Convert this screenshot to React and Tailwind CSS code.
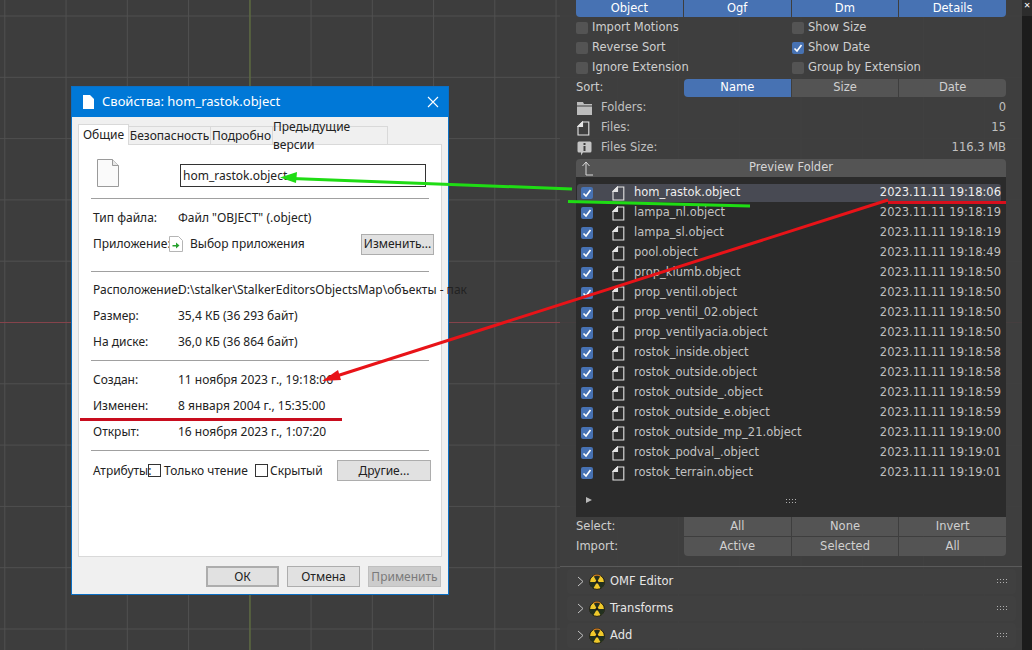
import React from "react";

const files = [
  ["hom_rastok.object", "2023.11.11 19:18:06"],
  ["lampa_nl.object", "2023.11.11 19:18:19"],
  ["lampa_sl.object", "2023.11.11 19:18:19"],
  ["pool.object", "2023.11.11 19:18:49"],
  ["prop_kiumb.object", "2023.11.11 19:18:50"],
  ["prop_ventil.object", "2023.11.11 19:18:50"],
  ["prop_ventil_02.object", "2023.11.11 19:18:50"],
  ["prop_ventilyacia.object", "2023.11.11 19:18:50"],
  ["rostok_inside.object", "2023.11.11 19:18:58"],
  ["rostok_outside.object", "2023.11.11 19:18:58"],
  ["rostok_outside_.object", "2023.11.11 19:18:59"],
  ["rostok_outside_e.object", "2023.11.11 19:18:59"],
  ["rostok_outside_mp_21.object", "2023.11.11 19:19:00"],
  ["rostok_podval_.object", "2023.11.11 19:19:01"],
  ["rostok_terrain.object", "2023.11.11 19:19:01"],
];

const gridX = Array.from({ length: 17 }, (_, i) => 4.8 + i * 61.25);
const gridY = Array.from({ length: 11 }, (_, i) => 16 + i * 61.3);

const Grid = () => (
  <svg className="absolute inset-0" width="1032" height="650">
    {gridX.map((x) => (
      <line key={x} x1={x} x2={x} y1="0" y2="650" stroke="#505050" />
    ))}
    {gridY.map((y) => (
      <line key={y} x1="0" x2="1032" y1={y} y2={y} stroke="#505050" />
    ))}
    <line x1="250" x2="250" y1="0" y2="650" stroke="#64793a" />
    <line x1="0" x2="1032" y1="322.5" y2="322.5" stroke="#85434b" />
  </svg>
);

const Arrows = () => (
  <svg className="absolute inset-0 pointer-events-none" width="1032" height="650">
    <line x1="292" y1="178.5" x2="572" y2="189" stroke="#1fdc14" strokeWidth="3" />
    <polygon points="280,177.5 297,172 296,183" fill="#1fdc14" />
    <line x1="568" y1="201.5" x2="750" y2="206" stroke="#1fdc14" strokeWidth="3" />
    <line x1="335" y1="376.5" x2="888" y2="200" stroke="#e81318" strokeWidth="3" />
    <polygon points="322,381 338,370 341,380" fill="#e81318" />
    <line x1="888" y1="202.5" x2="1006" y2="202.5" stroke="#d80f1c" strokeWidth="3" />
    <line x1="80" y1="419.5" x2="342" y2="419.5" stroke="#c80d1e" strokeWidth="3" />
  </svg>
);

const PageIcon = ({ className = "" }) => (
  <svg className={className} width="13" height="15" viewBox="0 0 13 15" fill="none" stroke="#e4e4e4" strokeWidth="1.1">
    <path d="M1 5.5 L5.5 1 H11.8 V14 H1 Z" />
    <path d="M1 5.5 L5.5 1 V5.5 Z" fill="#e4e4e4" />
  </svg>
);

const Check = ({ on }) => (
  <span className={`flex h-3 w-3 shrink-0 items-center justify-center rounded-[2px] ${on ? "bg-[#4772b3]" : "bg-[#545454]"}`}>
    {on && (
      <svg width="10" height="10" viewBox="0 0 10 10" fill="none" stroke="#fff" strokeWidth="1.6">
        <path d="M1.5 5.5 L4 8 L8.5 2" />
      </svg>
    )}
  </span>
);

const Option = ({ label, on }) => (
  <div className="flex h-5 items-center gap-1">
    <Check on={on} />
    <span>{label}</span>
  </div>
);

const Seg = ({ items, active, className = "" }) => (
  <div className={`flex gap-px overflow-hidden ${className}`}>
    {items.map((t) => (
      <div
        key={t}
        className={`flex flex-1 items-center justify-center ${t === active ? "bg-[#4772b3] text-white" : "bg-[#545454] text-[#d0d0d0]"}`}
      >
        {t}
      </div>
    ))}
  </div>
);

const Radiation = () => (
  <svg width="16" height="16" viewBox="0 0 16 16">
    <circle cx="8" cy="8" r="7.4" fill="#f0c92b" stroke="#1c1c14" strokeWidth="1" />
    <path d="M8 8 L4.3 1.6 A7.4 7.4 0 0 1 11.7 1.6 Z" fill="#c9761f" />
    <path d="M8 8 L0.6 8 A7.4 7.4 0 0 0 4.3 14.4 Z" fill="#22301f" />
    <path d="M8 8 L15.4 8 A7.4 7.4 0 0 1 11.7 14.4 Z" fill="#22301f" />
    <path d="M8 8 L5 2.6 A6.2 6.2 0 0 1 11 2.6 Z" fill="#22301f" />
    <circle cx="8" cy="8" r="1.6" fill="#1c1c14" />
  </svg>
);

const Grip = () => (
  <svg width="11" height="5" viewBox="0 0 11 5" fill="#b0b0b0">
    {[0, 3, 6, 9].map((x) => (
      <g key={x}>
        <rect x={x} y="0" width="1" height="1" />
        <rect x={x} y="3" width="1" height="1" />
      </g>
    ))}
  </svg>
);

const SubPanel = ({ title }) => (
  <div className="flex h-[25px] items-center rounded-[4px] bg-[#404040] pl-[10px] pr-[8px] mb-[2px]">
    <svg width="7" height="11" viewBox="0 0 7 11" fill="none" stroke="#c4c4c4" strokeWidth="1">
      <path d="M1 1 L6 5.5 L1 10" />
    </svg>
    <span className="ml-[5px]">
      <Radiation />
    </span>
    <span className="ml-[5px] flex-1 text-[#e6e6e6]">{title}</span>
    <Grip />
  </div>
);

const InfoRow = ({ icon, label, value }) => (
  <div className="flex h-5 items-center text-[#c0c0c0]">
    <span className="flex w-[25px] items-center pl-px">{icon}</span>
    <span className="flex-1">{label}</span>
    <span>{value}</span>
  </div>
);

const BlenderPanel = () => (
  <div className="relative flex w-[462px] flex-col bg-[#3e3e3e]/90 text-[11.5px] text-[#cfcfcf] font-['DejaVu_Sans',sans-serif]">
    <div className="flex flex-col pl-4 pr-4">
      <Seg items={["Object", "Ogf", "Dm", "Details"]} active="none-all" className="h-[17px] rounded-b-[4px] [&>div]:bg-[#4772b3] [&>div]:text-white" />
      <div className="mt-[1px] grid grid-cols-2 gap-x-[0px]">
        <div className="flex flex-col">
          <Option label="Import Motions" />
          <Option label="Reverse Sort" />
          <Option label="Ignore Extension" />
        </div>
        <div className="flex flex-col pl-[1px]">
          <Option label="Show Size" />
          <Option label="Show Date" on />
          <Option label="Group by Extension" />
        </div>
      </div>
      <div className="flex h-5 items-center">
        <span className="w-[108px]">Sort:</span>
        <Seg items={["Name", "Size", "Date"]} active="Name" className="h-[18px] flex-1 rounded-[4px]" />
      </div>
      <InfoRow
        label="Folders:"
        value="0"
        icon={
          <svg width="15" height="13" viewBox="0 0 15 13" fill="#bdbdbd">
            <path d="M0 0 H6 L7 2 H15 V3.5 H0 Z M0 4.5 H15 V13 H0 Z" />
          </svg>
        }
      />
      <InfoRow label="Files:" value="15" icon={<PageIcon />} />
      <InfoRow
        label="Files Size:"
        value="116.3 MB"
        icon={
          <svg width="15" height="15" viewBox="0 0 15 15">
            <path d="M2 0.5 H13 A1.5 1.5 0 0 1 14.5 2 V10 A1.5 1.5 0 0 1 13 11.5 H6 L4 14.5 V11.5 H2 A1.5 1.5 0 0 1 0.5 10 V2 A1.5 1.5 0 0 1 2 0.5 Z" fill="#c4c4c4" />
            <rect x="6.5" y="2" width="2" height="2" fill="#3e3e3e" />
            <rect x="6.5" y="5" width="2" height="5" fill="#3e3e3e" />
          </svg>
        }
      />
      <div className="relative mt-px flex h-[18px] items-center justify-center rounded-t-[4px] bg-[#545454] text-[#d6d6d6]">
        <svg className="absolute left-[5px] top-[2px]" width="13" height="15" viewBox="0 0 13 15" fill="none" stroke="#d8d8d8" strokeWidth="1">
          <path d="M5 14 V1 M1.5 5 L5 1 L8.5 5 M5 14 H12" />
        </svg>
        Preview Folder
      </div>

      <div className="flex h-[340px] flex-col bg-[#2b2b2b] pt-[7px]">
        {files.map(([name, date], i) => (
          <div
            key={name}
            className={`ml-px mr-[5px] flex h-[18px] items-center rounded-[3px] pl-[4px] pr-0 mb-[2px] ${i === 0 ? "bg-[#484a53] text-[#eeeeee]" : "text-[#c2c2c2]"}`}
          >
            <Check on />
            <PageIcon className="ml-[19px]" />
            <span className="ml-[9px] flex-1">{name}</span>
            <span className={i === 0 ? "text-[#eeeeee]" : "text-[#bebebe]"}>{date}</span>
          </div>
        ))}
        <div className="relative mt-[15px] flex items-center justify-center">
          <span className="absolute left-[10px] top-[-2px] h-0 w-0 border-y-[3px] border-l-[6px] border-y-transparent border-l-[#b8b8b8]" />
          <Grip />
        </div>
      </div>

      <div className="flex">
        <div className="flex w-[108px] flex-col">
          <span className="flex h-5 items-center">Select:</span>
          <span className="flex h-5 items-center">Import:</span>
        </div>
        <div className="flex flex-1 flex-col gap-px">
          <Seg items={["All", "None", "Invert"]} className="h-[19px]" />
          <Seg items={["Active", "Selected", "All"]} className="h-[19px] rounded-b-[4px]" />
        </div>
      </div>
    </div>

    <div className="mt-[9px] h-px bg-[#5a5a5a]" />
    <div className="mt-px flex flex-col pl-[7px] pr-[6px] pt-[1px]">
      <SubPanel title="OMF Editor" />
      <SubPanel title="Transforms" />
      <SubPanel title="Add" />
    </div>
  </div>
);

const TabBtn = ({ children, active, className = "" }) => (
  <div
    className={`flex items-center justify-center border border-[#d9d9d9] ${active ? "h-[21px] border-b-0 bg-white" : "h-[19px] bg-[#f0f0f0]"} ${className}`}
  >
    {children}
  </div>
);

const WinBtn = ({ children, className = "" }) => (
  <div className={`flex items-center justify-center border border-[#adadad] bg-[#e1e1e1] ${className}`}>{children}</div>
);

const Line = ({ className = "" }) => <div className={`mx-[12px] h-px bg-[#a0a0a0] ${className}`} />;

const Prop = ({ label, children, className = "" }) => (
  <div className={`flex h-[26px] items-center pl-[14px] ${className}`}>
    <span className="w-[85px] shrink-0">{label}</span>
    <span className="whitespace-nowrap">{children}</span>
  </div>
);

const PropertiesDialog = () => (
  <div className="absolute left-[71px] top-[86px] flex h-[509px] w-[378px] flex-col border border-[#0b6fc4] bg-[#f0f0f0] text-[12px] text-[#222] font-['Noto_Sans',sans-serif]">
    <div className="flex h-[30px] shrink-0 items-center bg-[#0078d7] pl-[11px] pr-[9px] text-[13px] text-white">
      <svg width="11" height="14" viewBox="0 0 11 14" fill="#fff">
        <path d="M0 0 H7 L11 4 V14 H0 Z" />
      </svg>
      <span className="ml-[8px] flex-1">Свойства: hom_rastok.object</span>
      <svg width="12" height="12" viewBox="0 0 12 12" stroke="#fff" strokeWidth="1.1">
        <path d="M1 1 L11 11 M11 1 L1 11" />
      </svg>
    </div>

    <div className="relative z-10 mt-[7px] flex h-[21px] items-end pl-[6px]">
      <TabBtn active className="w-[51px]">Общие</TabBtn>
      <TabBtn className="w-[82px] border-l-0">Безопасность</TabBtn>
      <TabBtn className="w-[62px] border-l-0">Подробно</TabBtn>
      <TabBtn className="w-[115px] border-l-0">Предыдущие версии</TabBtn>
    </div>

    <div className="mx-[6px] -mt-px h-[413px] border border-[#d9d9d9] bg-white">
      <div className="flex h-[53px] items-start">
        <svg className="ml-[18px] mt-[14px]" width="22" height="28" viewBox="0 0 22 28" fill="#fafafa" stroke="#9a9a9a">
          <path d="M0.5 0.5 H15.5 L21.5 6.5 V27.5 H0.5 Z" />
          <path d="M15.5 0.5 V6.5 H21.5" fill="#e8e8e8" />
        </svg>
        <div className="ml-[61px] mt-[19px] flex h-[23px] w-[246px] items-center border border-[#333] pl-[2px]">hom_rastok.object</div>
      </div>
      <Line />
      <Prop label="Тип файла:" className="mt-[6px]">Файл "OBJECT" (.object)</Prop>
      <div className="flex h-[26px] items-center pl-[14px]">
        <span className="w-[75px] shrink-0">Приложение:</span>
        <svg className="ml-[1px] shrink-0" width="14" height="16" viewBox="0 0 14 16" fill="#fff" stroke="#b5b5b5">
          <path d="M0.5 0.5 H9.5 L13.5 4.5 V15.5 H0.5 Z" />
          <path d="M3.5 9 H7 V6.5 L10.5 9.5 L7 12.5 V10.5 H3.5 Z" fill="#27a12e" stroke="none" />
        </svg>
        <span className="ml-[7px] flex-1">Выбор приложения</span>
        <WinBtn className="mr-[7px] h-[21px] w-[73px]">Изменить...</WinBtn>
      </div>
      <Line className="mt-[14px]" />
      <Prop label="Расположение:" className="mt-[5px]">D:\stalker\StalkerEditorsObjectsMap\объекты - пак</Prop>
      <Prop label="Размер:">35,4 КБ (36 293 байт)</Prop>
      <Prop label="На диске:">36,0 КБ (36 864 байт)</Prop>
      <Line className="mt-[5px]" />
      <Prop label="Создан:" className="mt-[6px]">11 ноября 2023 г., 19:18:06</Prop>
      <Prop label="Изменен:">8 января 2004 г., 15:35:00</Prop>
      <Prop label="Открыт:">16 ноября 2023 г., 1:07:20</Prop>
      <Line className="mt-[5px]" />
      <div className="mt-[9px] flex h-[21px] items-center pl-[14px]">
        <span className="w-[55px]">Атрибуты:</span>
        <span className="h-[13px] w-[13px] border border-[#333]" />
        <span className="ml-[3px] w-[91px]">Только чтение</span>
        <span className="h-[13px] w-[13px] border border-[#333]" />
        <span className="ml-[2px] w-[67px]">Скрытый</span>
        <WinBtn className="h-[21px] w-[94px]">Другие...</WinBtn>
      </div>
    </div>

    <div className="mt-[9px] flex justify-end gap-[8px] pr-[7px]">
      <WinBtn className="h-[21px] w-[73px] border-2 border-[#0078d7]">ОК</WinBtn>
      <WinBtn className="h-[21px] w-[73px]">Отмена</WinBtn>
      <div className="flex h-[21px] w-[73px] items-center justify-center border border-[#bfbfbf] bg-[#cccccc] text-[#7a7a7a]">Применить</div>
    </div>
  </div>
);

export default function App() {
  return (
    <div className="relative flex h-[650px] w-[1032px] overflow-hidden bg-[#3d3d3d]">
      <Grid />
      <div className="flex-1" />
      <BlenderPanel />
      <div className="relative w-[10px] bg-[#1c1c1c]">
        <div className="h-4 bg-[#2c2c2c] pl-[2px] text-[11px] leading-[10px] text-white">×</div>
      </div>
      <PropertiesDialog />
      <Arrows />
    </div>
  );
}
